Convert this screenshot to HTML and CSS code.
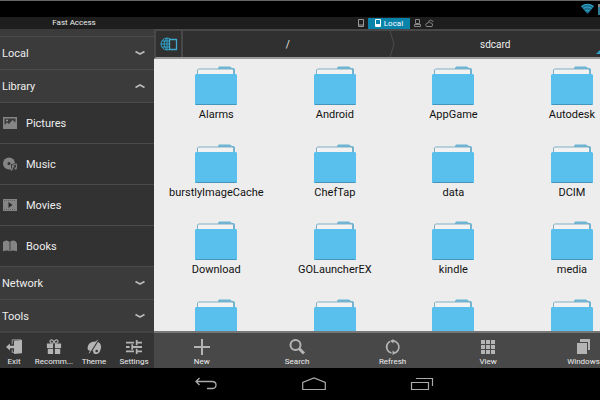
FILE: index.html
```html
<!DOCTYPE html>
<html lang="en">
<head>
<meta charset="utf-8">
<title>File Explorer</title>
<link rel="stylesheet" href="styles.css">
</head>
<body>
<svg class="defs" aria-hidden="true">
  <symbol id="folder" viewBox="0 0 42 40">
    <path d="M23 3.500V2l1-1.500h11L37 2h2l1 1.500V8H23z" fill="#6bb5d6"/>
    <path d="M2.500 10V4l1-1h34l1 1v6z" fill="#f2f2f2" stroke="#7fafc4"/>
    <path d="M1 8h40l1 1v30H0V9z" fill="#59c0ee"/>
    <path d="M1 38.500h40" stroke="#4595ba"/>
  </symbol>
  <symbol id="down" viewBox="0 0 10 6"><path d="M.5 1.500 5 4l4.500-2.500" fill="none" stroke="#bbb" stroke-width="1.600"/></symbol>
  <symbol id="up" viewBox="0 0 10 6"><path d="M.5 4.500 5 2l4.500 2.500" fill="none" stroke="#bbb" stroke-width="1.600"/></symbol>
</svg>
<div class="app">
  <div class="status">
    <svg class="wifi" viewBox="0 0 20 12"><path d="M0 3.500Q6.500-1.500 13 3.500L6.500 11z" fill="#1b6f8c"/><path d="M.5 3.500Q6.500-1 12.500 3.500M2.500 5.500q4-3 8 0M4.500 8q2-1.500 4 0" fill="none" stroke="#35a5ca" stroke-width="1.200"/><path d="M17 1h3v3h-3z" fill="#888"/><path d="M17 4h3v8h-3z" fill="#2b7c96"/></svg>
  </div>
  <header class="title">
    <h1>Fast Access</h1>
    <nav class="tabs" aria-label="Windows">
      <button aria-label="Home"><svg width="6" height="8" viewBox="0 0 6 8"><path d="M.5.500h5v7h-5zM1 6h4" fill="none" stroke="#999"/></svg></button>
      <button class="on"><svg width="6" height="8" viewBox="0 0 6 8"><path d="M.5.500h5v7h-5zM1 5.500h4v1H1" fill="none" stroke="#fff"/></svg>Local</button>
      <button aria-label="Network"><svg width="7" height="8" viewBox="0 0 7 8"><path d="M1.500.500h4v4h-4zM.5 5.500h6v2h-6z" fill="none" stroke="#888"/></svg></button>
      <button aria-label="Cloud"><svg width="9" height="8" viewBox="0 0 9 8"><path d="M1.500 7.500C0 6 1 4 2.500 4.500 2.500 2.500 5 2.500 5.500 4c2-.5 2.500 2 1.500 3.500zM3.500 2.500C5 .5 8 1 8 3" fill="none" stroke="#888"/></svg></button>
    </nav>
  </header>
  <div class="body">
    <aside class="side">
      <div class="groups">
        <button class="group">Local<svg><use href="#down"/></svg></button>
        <button class="group">Library<svg><use href="#up"/></svg></button>
        <a class="item" href="#pictures"><svg viewBox="0 0 14 14"><path d="M0 1h14v12H0z" fill="#858585"/><path d="M1.500 2.500h11v4L9.500 4 6 8 4 6.500 1.500 9z" fill="#3b3b3b"/><circle cx="4" cy="4.500" r="1" fill="#999"/></svg>Pictures</a>
        <a class="item" href="#music"><svg viewBox="0 0 14 14"><circle cx="6" cy="6.500" r="6" fill="#858585"/><circle cx="6" cy="6.500" r="1.500" fill="#323232"/><path d="M9 12.500V8l4-1v4.500" fill="none" stroke="#3c3c3c" stroke-width="2"/><path d="M9.500 12V8l4-1v4.500" fill="none" stroke="#808080"/><path d="M7.500 11.500h2v2h-2zM11.500 10.500h2v2h-2z" fill="#808080"/></svg>Music</a>
        <a class="item" href="#movies"><svg viewBox="0 0 14 14"><path d="M0 1h14v12H0z" fill="#858585"/><path d="M1 2.500h12M1 11.500h12" stroke="#626262" stroke-dasharray="1 1"/><path d="M5.500 4 9.500 7l-4 3z" fill="#292929"/></svg>Movies</a>
        <a class="item" href="#books"><svg viewBox="0 0 15 14"><path d="M0 3 1 2Q5 0 7 3q3-3 6.500-1L15 4v8.500q-5-1.500-7.500 0-3-1.500-7.500 0z" fill="#858585"/><path d="M7.500 3v9" stroke="#3b3b3b"/></svg>Books</a>
        <button class="group">Network<svg><use href="#down"/></svg></button>
        <button class="group">Tools<svg><use href="#down"/></svg></button>
      </div>
      <div class="tools small">
        <button><svg viewBox="0 0 18 18"><path d="M7 6V1h10v14h-2M7 12v3h2" fill="none" stroke="#aaa"/><path d="M9 2l9-1v15l-9 1z" fill="#b4b4b4"/><path d="m0 9 4.500-4v2.500H9v3H4.500V13z" fill="#b4b4b4"/></svg>Exit</button>
        <button><svg viewBox="0 0 18 18"><path d="M1 5h7v5H1zM10 5h7v5h-7zM2 11h6v6H2zM10 11h6v6h-6z" fill="#b4b4b4"/><path d="M8.500 4.500C5 5 3.500 3 5 1.500s3.500.5 4 2.500c.5-2 2.500-4 4-2.500s0 3.500-3.500 3" fill="none" stroke="#b4b4b4" stroke-width="1.300"/></svg>Recomm...</button>
        <button><svg viewBox="0 0 18 18"><path d="M9 3c5-1 8 2 8 6-.5 4-2 8-6 8-4 0-2-4-4-4-4 1-6-1-5-4 .5-4 4-6 7-6z" fill="#b4b4b4"/><path d="M14 1 4 17" stroke="#383838" stroke-width="1.500"/><path d="M13 1 3.500 16" stroke="#b4b4b4"/><circle cx="12" cy="13.500" r="1.500" fill="#383838"/></svg>Theme</button>
        <button><svg viewBox="0 0 18 18"><path d="M0 4h9m3 0h6M0 9h4m3 0h11M0 14h9m3 0h6M12 1v6M7 6v6M12 11v6" fill="none" stroke="#b4b4b4" stroke-width="2"/></svg>Settings</button>
      </div>
    </aside>
    <main class="main">
      <nav class="path" aria-label="Path">
        <button class="switch" aria-label="Storage"><svg viewBox="0 0 18 16"><circle cx="7" cy="8" r="6" fill="none" stroke="#2fa3cc"/><path d="M7 2v12M1 8h8M2 5h8M2 11h8M7 2Q1 8 7 14" fill="none" stroke="#2fa3cc"/><path d="M9.500 3.500h7v10h-7z" fill="#303030" stroke="#3fa9ce" stroke-width="1.300"/></svg></button>
        <a class="crumb" href="#root">/</a>
        <svg class="sep" viewBox="0 0 6 26" preserveAspectRatio="none"><path d="m1 0 4 13-4 13" fill="none" stroke="#4c4c4c"/></svg>
        <a class="crumb" href="#sdcard">sdcard</a>
        <svg class="corner" viewBox="0 0 4 4"><path d="M4 0v4H0z" fill="#2fa3cc"/></svg>
      </nav>
      <div class="files">
        <a href="#f"><svg><use href="#folder"/></svg>Alarms</a>
        <a href="#f"><svg><use href="#folder"/></svg>Android</a>
        <a href="#f"><svg><use href="#folder"/></svg>AppGame</a>
        <a href="#f"><svg><use href="#folder"/></svg>Autodesk</a>
        <a href="#f"><svg><use href="#folder"/></svg>burstlyImageCache</a>
        <a href="#f"><svg><use href="#folder"/></svg>ChefTap</a>
        <a href="#f"><svg><use href="#folder"/></svg>data</a>
        <a href="#f"><svg><use href="#folder"/></svg>DCIM</a>
        <a href="#f"><svg><use href="#folder"/></svg>Download</a>
        <a href="#f"><svg><use href="#folder"/></svg>GOLauncherEX</a>
        <a href="#f"><svg><use href="#folder"/></svg>kindle</a>
        <a href="#f"><svg><use href="#folder"/></svg>media</a>
        <a href="#f"><svg><use href="#folder"/></svg></a>
        <a href="#f"><svg><use href="#folder"/></svg></a>
        <a href="#f"><svg><use href="#folder"/></svg></a>
        <a href="#f"><svg><use href="#folder"/></svg></a>
      </div>
      <div class="tools wide">
        <button><svg viewBox="0 0 18 18"><path d="M9 1v16M1 9h16" stroke="#b4b4b4" stroke-width="2"/></svg>New</button>
        <button><svg viewBox="0 0 18 18"><circle cx="7.500" cy="7" r="5" fill="none" stroke="#b4b4b4" stroke-width="2"/><path d="m11 10.500 5 5" stroke="#b4b4b4" stroke-width="3"/></svg>Search</button>
        <button><svg viewBox="0 0 18 18"><path d="M7.500 15A6.200 6.200 0 0 1 4.500 4.500M8 2.900A6.200 6.200 0 0 1 10.500 15M4.500 4.500 6 3.500" fill="none" stroke="#b4b4b4" stroke-width="1.600"/><path d="M9.500 1v4.500L6 3zM8.500 12.500V17l3.500-2z" fill="#b4b4b4"/></svg>Refresh</button>
        <button><svg viewBox="0 0 18 18"><path d="M2 2h4v4H2zM7 2h4v4H7zM12 2h4v4h-4zM2 7h4v4H2zM7 7h4v4H7zM12 7h4v4h-4zM2 12h4v4H2zM7 12h4v4H7zM12 12h4v4h-4z" fill="#b4b4b4"/></svg>View</button>
        <button><svg viewBox="0 0 18 18"><path d="M3 5h10v11H3zM6 1h10v11h-2V4H6z" fill="#b4b4b4"/></svg>Windows</button>
      </div>
    </main>
  </div>
  <footer class="keys">
    <button aria-label="Back"><svg viewBox="0 0 24 16"><path d="M5.500 2 2 5.500 5.500 9M2 5.500h16q4 0 4 3.500t-4 3.500h-5" fill="none" stroke="#aaa" stroke-width="1.300"/></svg></button>
    <button aria-label="Home"><svg viewBox="0 0 24 16"><path d="M.7 13.500v-7L12 2l11.300 4.500v7z" fill="none" stroke="#aaa" stroke-width="1.200"/></svg></button>
    <button aria-label="Recent"><svg viewBox="0 0 24 16"><path d="M1.500 6.500h17v7h-17zM6 2.500h16.500V10" fill="none" stroke="#aaa" stroke-width="1.200"/></svg></button>
  </footer>
</div>
</body>
</html>
```
FILE: styles.css
```css
* { box-sizing: border-box; }
body { margin: 0; background: #000; font-family: Roboto, "Liberation Sans", sans-serif; color: #eee; }
button { border: 0; padding: 0; background: none; color: inherit; font: inherit; }
a { color: inherit; text-decoration: none; }
svg { display: block; flex: none; }
.defs { position: absolute; width: 0; height: 0; }

.app { display: flex; flex-direction: column; height: 100vh; overflow: hidden; }
.status { height: 17px; flex: none; border-top: 1px solid #666; display: flex; justify-content: flex-end; padding-top: 2px; }
.wifi { width: 20px; height: 12px; margin-right: -1px; }
.title { height: 12px; flex: none; background: #1e1e1e; display: flex; align-items: center; }
.title h1 { width: 154px; flex: none; margin: 0; padding-right: 6px; font-size: 8px; line-height: 12px; font-weight: 400; text-align: center; }
.tabs { flex: 1; display: flex; justify-content: center; gap: 4px; padding-left: 38px; font-size: 8px; line-height: 11px; }
.tabs button { display: flex; align-items: center; gap: 3px; }
.tabs .on { background: #0a83ab; color: #fff; padding: 0 7px; height: 11px; }

.body { flex: 1; min-height: 0; display: flex; }
.side { width: 154px; flex: none; display: flex; flex-direction: column; background: #3b3b3b; }
.groups { flex: 1; min-height: 0; overflow: hidden; padding-top: 7px; display: flex; flex-direction: column; }
.group { height: 33px; flex: none; border-top: 1px solid #4b4b4b; display: flex; align-items: center; justify-content: space-between; padding: 0 9px 0 2px; font-size: 11px; text-align: left; }
.group svg { width: 10px; height: 6px; }
.item { height: 41px; flex: none; border-top: 1px solid #4b4b4b; background: #323232; display: flex; align-items: center; gap: 9px; padding-left: 3px; font-size: 11px; }
.item svg { width: 14px; height: 14px; }

.tools { height: 37px; flex: none; display: flex; border-top: 2px solid #5c5c5c; font-size: 8px; line-height: 10px; }
.tools button { flex: 1; min-width: 0; display: flex; flex-direction: column; align-items: center; padding-top: 5px; gap: 1px; white-space: nowrap; }
.tools svg { width: 18px; height: 18px; }
.small { background: #343434; border-top-color: #444; margin-left: -6px; }
.small svg { width: 16px; height: 18px; }
.wide { background: #484848; border-top-color: #777; width: 107%; }

.main { flex: 1; min-width: 0; overflow: hidden; display: flex; flex-direction: column; }
.path { height: 30px; flex: none; display: flex; background: #303030; border: 2px solid #484848; border-right: 0; border-bottom-color: #999; font-size: 10px; position: relative; }
.switch { width: 27px; flex: none; border-right: 2px solid #484848; display: flex; align-items: center; justify-content: center; }
.switch svg { width: 18px; height: 16px; }
.crumb { flex: 1; display: flex; align-items: center; justify-content: center; padding: 0 0 0 4px; }
.sep + .crumb { padding: 0 4px 0 0; }
.sep { width: 6px; height: 26px; }
.corner { width: 4px; height: 4px; position: absolute; right: 0; bottom: 3px; }
.files { flex: 1; min-height: 0; overflow: hidden; width: 107%; padding: 7px 0 0 3px; display: grid; grid-template-columns: repeat(4, 1fr); grid-template-rows: 78px 77px 78px 77px; background: #ededed; color: #111; font-size: 11px; line-height: 14px; }
.files a { display: flex; flex-direction: column; align-items: center; gap: 2px; }
.files svg { width: 42px; height: 40px; }

.keys { height: 32px; flex: none; display: flex; justify-content: center; gap: 84px; padding-left: 28px; }
.keys button { display: flex; align-items: center; }
.keys svg { width: 24px; height: 16px; }
```
